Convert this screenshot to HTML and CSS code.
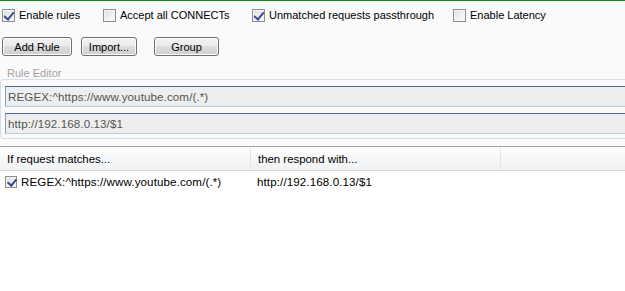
FILE: index.html
```html
<!DOCTYPE html>
<html>

<head>
    <title>Rules</title>
    <link rel="stylesheet" href="styles.css">
</head>

<body>
    <div class="options">
        <label class="opt optRules"><span class="check checked"></span>Enable rules</label>
        <label class="opt optConnect"><span class="check"></span>Accept all CONNECTs</label>
        <label class="opt optPass"><span class="check checked"></span>Unmatched requests passthrough</label>
        <label class="opt"><span class="check"></span>Enable Latency</label>
    </div>
    <div class="buttons">
        <button type="button" class="btnAdd">Add Rule</button>
        <button type="button" class="btnImport">Import...</button>
        <button type="button" class="btnGroup">Group</button>
    </div>
    <div class="editorLbl">Rule Editor</div>
    <div class="editor">
        <div class="field">REGEX:^https://www.youtube.com/(.*)</div>
        <div class="field">http://192.168.0.13/$1</div>
    </div>
    <div class="rules">
        <div class="rulesHead">
            <div class="col">If request matches...</div>
            <div class="col">then respond with...</div>
            <div class="col"></div>
        </div>
        <div class="ruleRow">
            <div class="col"><span class="check checked small"></span>REGEX:^https://www.youtube.com/(.*)</div>
            <div class="col">http://192.168.0.13/$1</div>
            <div class="col"></div>
        </div>
    </div>
</body>

</html>
```

FILE: styles.css
```css
* {
    padding: 0;
    margin: 0;
    box-sizing: border-box;
}

html,
body {
    height: 100%;
}

body {
    font-family: "Liberation Sans", Arial, sans-serif;
    font-size: 11px;
    color: #000;
    background: #fafafa;
    border-top: 1px solid #0a8a0a;
    overflow: hidden;
    display: flex;
    flex-direction: column;
}

.options {
    display: flex;
    align-items: center;
    padding: 8px 0 0 2px;
    height: 21px;
}

.opt {
    display: flex;
    align-items: center;
    line-height: 13px;
}

.optRules {
    width: 101px;
}

.optConnect {
    width: 149px;
}

.optPass {
    width: 201px;
}

.check {
    width: 13px;
    height: 13px;
    border: 1px solid #8f8f8f;
    background: linear-gradient(135deg, #dcdcdc, #f6f6f6 70%, #ffffff);
    box-shadow: inset 0 0 0 1px #f4f4f4;
    margin-right: 4px;
    flex: none;
    position: relative;
}

.checked::after {
    content: "";
    position: absolute;
    left: 3px;
    top: 0px;
    width: 4px;
    height: 8px;
    border: solid #3b4a94;
    border-width: 0 2px 2px 0;
    transform: rotate(40deg);
}

.buttons {
    display: flex;
    padding: 15px 0 0 2px;
}

.buttons button {
    height: 19px;
    font-family: "Liberation Sans", Arial, sans-serif;
    font-size: 11px;
    color: #000;
    border: 1px solid #707070;
    border-radius: 3px;
    background: linear-gradient(#f2f2f2, #ebebeb 50%, #dddddd 50%, #cfcfcf);
    box-shadow: inset 0 0 0 1px #fcfcfc;
}

.btnAdd {
    width: 70px;
    margin-right: 9px;
}

.btnImport {
    width: 56px;
    margin-right: 17px;
}

.btnGroup {
    width: 65px;
}

.editorLbl {
    color: #a3a3a3;
    padding: 11px 0 0 7px;
    line-height: 13px;
    height: 23px;
}

.editor {
    width: calc(100% + 10px);
    border: 1px solid #d5dfe5;
    border-radius: 3px;
    padding: 6px 0 4px 4px;
    display: flex;
    flex-direction: column;
    gap: 6px;
}

.field {
    height: 21px;
    background: #eeeeee;
    border: 1px solid #8aa0c0;
    border-top-color: #4a6898;
    border-bottom-color: #b6cde9;
    color: #555;
    font-size: 11.6px;
    letter-spacing: 0.1px;
    line-height: 19px;
    padding-left: 2px;
}

.rules {
    margin-top: 7px;
    background: #fff;
    border-top: 1px solid #a0a0a0;
    flex: 1;
}

.rulesHead,
.ruleRow {
    display: flex;
}

.rulesHead {
    height: 24px;
    background: linear-gradient(#ffffff, #f7f8f9 40%, #f1f2f3);
    border-top: 1px solid #fff;
    border-bottom: 1px solid #d5d5d5;
    font-size: 11.4px;
}

.col {
    width: 250px;
    display: flex;
    align-items: center;
    padding-left: 7px;
    white-space: nowrap;
}

.col:last-child {
    flex: 1;
}

.rulesHead .col {
    border-right: 1px solid #e3e4e5;
}

.rulesHead .col:first-child {
    width: 251px;
}

.rulesHead .col:last-child {
    border-right: 0;
}

.ruleRow {
    height: 21px;
}

.ruleRow .col {
    font-size: 11.6px;
    letter-spacing: 0.1px;
}

.ruleRow .col:first-child {
    width: 251px;
    padding-left: 5px;
}

.ruleRow .col:nth-child(2) {
    padding-left: 6px;
}

.small {
    width: 12px;
    height: 12px;
}

.small::after {
    left: 3px;
    top: 0;
    height: 7px;
}
```
